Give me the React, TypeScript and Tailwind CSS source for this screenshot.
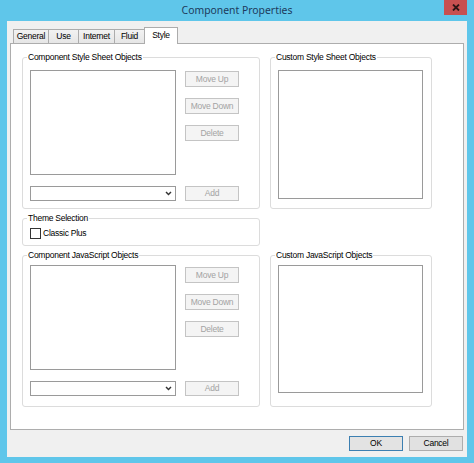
import React from "react";

const FONT = "font-['Liberation_Sans',Arial,sans-serif]";

function Btn({ label, w = "w-[54px]", h = "h-[16px]" }: { label: string; w?: string; h?: string }) {
  return (
    <div
      className={`${w} ${h} border border-[#c4c4c4] bg-[#f4f4f4] text-[#a3a3a3] flex items-center justify-center leading-none`}
    >
      {label}
    </div>
  );
}

function Combo() {
  return (
    <div className="w-[146px] h-[15px] border border-[#9a9a9a] bg-white flex items-center justify-end pr-[3px]">
      <svg width="7" height="5" viewBox="0 0 7 5">
        <path d="M1 1 L3.5 3.6 L6 1" fill="none" stroke="#333" strokeWidth="1.4" />
      </svg>
    </div>
  );
}

function Group({
  label,
  children,
  inner,
}: {
  label: string;
  children?: React.ReactNode;
  inner: string;
}) {
  return (
    <div className="relative flex flex-col pt-[6px] h-full">
      <div className={`flex-1 border border-[#dcdcdc] rounded-[3px] ${inner}`}>{children}</div>
      <span className="absolute left-[5px] top-0 leading-[12px] bg-white px-[1px] text-black whitespace-nowrap">
        {label}
      </span>
    </div>
  );
}

function ObjectsPanel({ btnPad }: { btnPad: string }) {
  return (
    <div className="flex flex-col">
      <div className="flex gap-[9px]">
        <div className="w-[146px] h-[105px] border border-[#9a9a9a] bg-white" />
        <div className={`flex flex-col gap-[11px] ${btnPad}`}>
          <Btn label="Move Up" />
          <Btn label="Move Down" />
          <Btn label="Delete" />
        </div>
      </div>
      <div className="flex gap-[9px] mt-[11px]">
        <Combo />
        <Btn label="Add" h="h-[15px]" />
      </div>
    </div>
  );
}

function Tab({ label, w, selected }: { label: string; w: string; selected?: boolean }) {
  if (selected) {
    return (
      <div
        className={`${w} h-[17px] -ml-px mb-[-1px] relative z-10 bg-white border border-b-0 border-[#acacac] flex items-start justify-center pt-[3px] leading-none`}
      >
        {label}
      </div>
    );
  }
  return (
    <div
      className={`${w} h-[14px] -ml-px first:ml-0 bg-gradient-to-b from-[#f2f2f2] to-[#e6e6e6] border border-b-0 border-[#acacac] flex items-center justify-center leading-none`}
    >
      {label}
    </div>
  );
}

export default function App() {
  return (
    <div className={`w-[474px] h-[463px] bg-[#5fc6ea] flex flex-col ${FONT} text-[8.5px] tracking-[-0.25px] text-black`}>
      <div className="h-[21px] relative flex items-center justify-center">
        <span className="font-['Noto_Sans',sans-serif] text-[10.4px] tracking-normal text-[#1d3a5c] leading-none">
          Component Properties
        </span>
        <div className="absolute right-[7px] top-0 w-[23px] h-[15px] bg-[#c75050] flex items-center justify-center">
          <svg width="8" height="7" viewBox="0 0 8 7">
            <path d="M1 0.5 L7 6.5 M7 0.5 L1 6.5" stroke="#2b1515" strokeWidth="1.8" />
          </svg>
        </div>
      </div>

      <div className="flex-1 mx-[7px] mb-[6px] bg-[#f0f0f0] flex flex-col">
        <div className="mt-[6px] ml-[6px] h-[16px] flex items-end">
          <Tab label="General" w="w-[36px]" />
          <Tab label="Use" w="w-[31px]" />
          <Tab label="Internet" w="w-[37px]" />
          <Tab label="Fluid" w="w-[31px]" />
          <Tab label="Style" w="w-[34px]" selected />
        </div>

        <div className="mx-[3px] h-[387px] border border-[#adadad] bg-white pl-[11px] pt-[7px]">
          <div className="grid grid-cols-[238px_162px] grid-rows-[158px_34px_158px] gap-x-[10px] gap-y-[3px]">
            <Group label="Component Style Sheet Objects" inner="pt-[12px] px-[7px]">
              <ObjectsPanel btnPad="pt-[1px]" />
            </Group>
            <Group label="Custom Style Sheet Objects" inner="pt-[12px] px-[7px]">
              <div className="w-[145px] h-[129px] border border-[#9a9a9a] bg-white" />
            </Group>

            <Group label="Theme Selection" inner="pt-[9px] px-[7px]">
              <div className="flex items-center gap-[2px]">
                <div className="w-[11px] h-[11px] border border-[#333] bg-white" />
                <span className="leading-none">Classic Plus</span>
              </div>
            </Group>
            <div />

            <Group label="Component JavaScript Objects" inner="pt-[9px] px-[7px]">
              <ObjectsPanel btnPad="pt-[2px]" />
            </Group>
            <Group label="Custom JavaScript Objects" inner="pt-[9px] px-[7px]">
              <div className="w-[145px] h-[128px] border border-[#9a9a9a] bg-white" />
            </Group>
          </div>
        </div>

        <div className="flex justify-end gap-[6px] mt-[6px] mr-[4px]">
          <div className="w-[54px] h-[15px] border border-[#3c7fb1] bg-[#e3e3e3] flex items-center justify-center leading-none">
            OK
          </div>
          <div className="w-[54px] h-[15px] border border-[#adadad] bg-[#e1e1e1] flex items-center justify-center leading-none">
            Cancel
          </div>
        </div>
      </div>
    </div>
  );
}
